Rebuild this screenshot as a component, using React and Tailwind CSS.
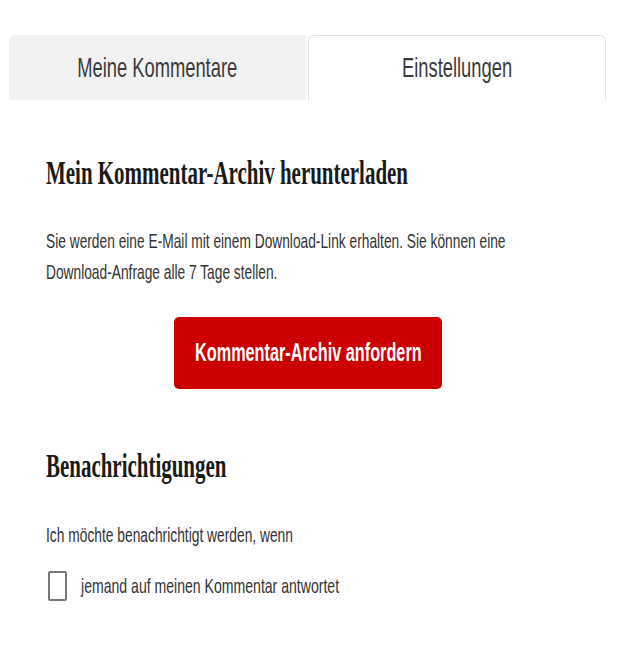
const sans = { fontFamily: '"Liberation Sans", Arial, sans-serif' };
const serif = { fontFamily: '"Liberation Serif", "Times New Roman", serif' };

// the page is drawn with narrow type; squeeze the real text horizontally
function Narrow({ children, className = "", scale = "scale-x-[0.66]", origin = "origin-left" }) {
  return <span className={`inline-block whitespace-nowrap ${scale} ${origin} ${className}`}>{children}</span>;
}

export default function App() {
  return (
    <div className="min-h-[672px] w-[620px] overflow-hidden bg-white text-[#222]" style={sans}>
      <div className="flex gap-[2px] pl-[9px] pr-[14px] pt-[35px]">
        <button className="flex h-[65px] flex-1 items-center justify-center rounded-tl-[6px] bg-[#f2f2f2] text-[28px] text-[#3a3a3a]">
          <Narrow scale="scale-x-[0.655]" origin="origin-center">Meine Kommentare</Narrow>
        </button>
        <button className="flex h-[65px] flex-1 items-center justify-center rounded-t-[6px] border border-b-0 border-[#e3e3e3] bg-white text-[28px] text-[#3a3a3a]">
          <Narrow scale="scale-x-[0.655]" origin="origin-center">Einstellungen</Narrow>
        </button>
      </div>

      <div className="pl-[46px] pr-[40px]">
        <h2 className="mt-[55px] text-[33px] font-bold leading-[36px] text-[#1a1a1a]" style={serif}>
          <Narrow scale="scale-x-[0.635]">Mein Kommentar-Archiv herunterladen</Narrow>
        </h2>
        <p className="mt-[34px] text-[21px] leading-[31px] text-[#333]">
          <Narrow scale="scale-x-[0.655]" className="block">
            Sie werden eine E-Mail mit einem Download-Link erhalten. Sie können eine
          </Narrow>
          <Narrow scale="scale-x-[0.655]" className="block">
            Download-Anfrage alle 7 Tage stellen.
          </Narrow>
        </p>
        <div className="mt-[30px] flex pl-[128px]">
          <button className="flex h-[72px] w-[268px] items-center justify-center rounded-[5px] bg-[#cc0000] text-[25px] font-bold text-white">
            <Narrow scale="scale-x-[0.65]" origin="origin-center">Kommentar-Archiv anfordern</Narrow>
          </button>
        </div>

        <h2 className="mt-[59px] text-[33px] font-bold leading-[36px] text-[#1a1a1a]" style={serif}>
          <Narrow scale="scale-x-[0.635]">Benachrichtigungen</Narrow>
        </h2>
        <p className="mt-[39px] text-[21px] leading-[24px] text-[#333]">
          <Narrow scale="scale-x-[0.657]">Ich möchte benachrichtigt werden, wenn</Narrow>
        </p>
        <label className="mt-[23px] flex items-center gap-[14px]">
          <span className="ml-[2px] block h-[30px] w-[19px] shrink-0 rounded-[2px] border-2 border-[#777]" />
          <span className="text-[21px] text-[#333]">
            <Narrow scale="scale-x-[0.67]">jemand auf meinen Kommentar antwortet</Narrow>
          </span>
        </label>
      </div>
    </div>
  );
}
